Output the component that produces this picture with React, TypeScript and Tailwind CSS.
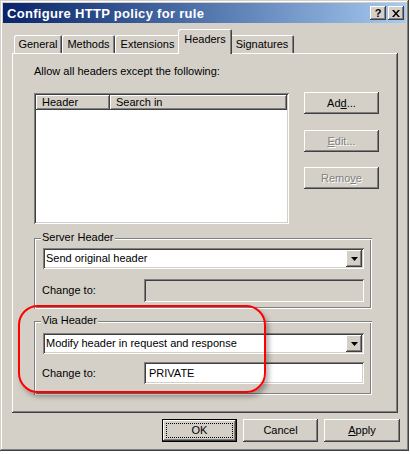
const RAISED =
  "shadow-[inset_-1px_-1px_#404040,inset_1px_1px_#ffffff,inset_-2px_-2px_#808080,inset_2px_2px_#d4d0c8]";
const SUNKEN =
  "shadow-[inset_1px_1px_#808080,inset_-1px_-1px_#ffffff,inset_2px_2px_#404040,inset_-2px_-2px_#d4d0c8]";
const ETCHED =
  "shadow-[inset_1px_1px_#808080,inset_-1px_-1px_#ffffff,inset_2px_2px_#ffffff,inset_-2px_-2px_#808080]";

const TABS = [
  { label: "General", w: "w-[48px]" },
  { label: "Methods", w: "w-[53px]" },
  { label: "Extensions", w: "w-[65px]" },
  { label: "Headers", w: "w-[50px]", active: true },
  { label: "Signatures", w: "w-[64px]" },
];

function Btn({
  children,
  disabled,
  isDefault,
  className = "",
}: {
  children: React.ReactNode;
  disabled?: boolean;
  isDefault?: boolean;
  className?: string;
}) {
  if (isDefault) {
    return (
      <div className={`h-[23px] w-[75px] border border-black ${className}`}>
        <div className={`relative flex h-full w-full items-center justify-center bg-[#d4d0c8] ${RAISED}`}>
          <div className="absolute inset-[3px] border border-dotted border-black" />
          <span className="text-black">{children}</span>
        </div>
      </div>
    );
  }
  return (
    <div
      className={`flex h-[22px] w-[75px] items-center justify-center bg-[#d4d0c8] ${RAISED} ${className} ${
        disabled ? "text-[#808080] [text-shadow:1px_1px_0_#ffffff]" : "text-black"
      }`}
    >
      {children}
    </div>
  );
}

function Combo({ value, className = "" }: { value: string; className?: string }) {
  return (
    <div className={`flex h-[21px] items-center bg-white p-[2px] ${SUNKEN} ${className}`}>
      <span className="flex-1 pl-[1px] text-black">{value}</span>
      <div className={`flex h-[17px] w-[16px] items-center justify-center bg-[#d4d0c8] ${RAISED}`}>
        <svg width="7" height="4" viewBox="0 0 7 4">
          <path d="M0 0h7L3.5 4z" fill="#000" />
        </svg>
      </div>
    </div>
  );
}

function GroupBox({
  title,
  className = "",
  children,
}: {
  title: string;
  className?: string;
  children: React.ReactNode;
}) {
  return (
    <div className={`relative w-[338px] ${ETCHED} ${className}`}>
      <span className="absolute -top-[7px] left-[7px] bg-[#d4d0c8] px-[1px] leading-[13px] text-black">
        {title}
      </span>
      {children}
    </div>
  );
}

export default function App() {
  return (
    <div className="h-[454px] w-[410px] bg-white font-['Liberation_Sans',Arial,sans-serif] text-[11px] leading-[13px]">
      <div className="h-[451px] w-[409px] bg-[#d4d0c8] p-[3px] shadow-[inset_-1px_-1px_#404040,inset_1px_1px_#d4d0c8,inset_-2px_-2px_#808080,inset_2px_2px_#ffffff]">
        {/* title bar */}
        <div className="flex h-[20px] items-center bg-gradient-to-r from-[#0a246a] to-[#a6caf0] pl-[4px] pr-[2px]">
          <span className="flex-1 text-[13px] font-bold tracking-[0.3px] text-white">
            Configure HTTP policy for rule
          </span>
          <div className={`flex h-[14px] w-[16px] items-center justify-center bg-[#d4d0c8] ${RAISED}`}>
            <span className="text-[11px] font-bold leading-none text-black">?</span>
          </div>
          <div className={`ml-[2px] flex h-[14px] w-[16px] items-center justify-center bg-[#d4d0c8] ${RAISED}`}>
            <svg width="8" height="7" viewBox="0 0 8 7">
              <path d="M0 0h2l2 2.5L6 0h2L5 3.5 8 7H6L4 4.5 2 7H0l3-3.5z" fill="#000" />
            </svg>
          </div>
        </div>

        {/* tabs */}
        <div className="ml-[9px] mt-[9px] w-[386px]">
          <div className="flex h-[21px] items-end pl-[2px]">
            {TABS.map((t) =>
              t.active ? (
                <div
                  key={t.label}
                  className={`relative z-10 -mx-[2px] -mb-[1px] flex h-[21px] ${t.w} box-content items-start justify-center rounded-t-[2px] bg-[#d4d0c8] px-[2px] pt-[4px] text-black shadow-[inset_1px_1px_#ffffff,inset_-1px_0_#404040,inset_-2px_0_#808080]`}
                >
                  {t.label}
                </div>
              ) : (
                <div
                  key={t.label}
                  className={`flex h-[18px] ${t.w} items-start justify-center rounded-t-[2px] bg-[#d4d0c8] pt-[3px] text-black shadow-[inset_1px_1px_#ffffff,inset_-1px_0_#404040,inset_-2px_0_#808080]`}
                >
                  {t.label}
                </div>
              )
            )}
          </div>

          {/* tab panel */}
          <div className="relative h-[360px] pl-[22px] pt-[12px] shadow-[inset_-1px_-1px_#404040,inset_1px_1px_#ffffff,inset_-2px_-2px_#808080]">
            <p className="text-black">Allow all headers except the following:</p>

            <div className="mt-[15px] flex">
              <div className={`h-[131px] w-[255px] bg-white p-[2px] ${SUNKEN}`}>
                <div className="flex h-[15px]">
                  <div className={`flex w-[74px] items-center bg-[#d4d0c8] pl-[6px] ${RAISED}`}>Header</div>
                  <div className={`flex flex-1 items-center bg-[#d4d0c8] pl-[6px] ${RAISED}`}>Search in</div>
                </div>
              </div>
              <div className="-mt-[1px] ml-[15px] flex flex-col">
                <Btn>
                  Ad<span className="underline">d</span>...
                </Btn>
                <Btn disabled className="mt-[16px]">
                  <span className="underline">E</span>dit...
                </Btn>
                <Btn disabled className="mt-[15px]">
                  Remo<span className="underline">v</span>e
                </Btn>
              </div>
            </div>

            <GroupBox title="Server Header" className="mt-[14px] h-[71px] pt-[10px]">
              <Combo value="Send original header" className="ml-[9px] w-[321px]" />
              <div className="mt-[10px] flex items-center">
                <span className="ml-[8px] w-[102px] text-black">Change to:</span>
                <div className={`h-[23px] w-[220px] bg-[#d4d0c8] ${SUNKEN}`} />
              </div>
            </GroupBox>

            <GroupBox title="Via Header" className="mt-[12px] h-[74px] pt-[12px]">
              <Combo value="Modify header in request and response" className="ml-[9px] w-[321px]" />
              <div className="mt-[8px] flex items-center">
                <span className="ml-[8px] w-[102px] text-black">Change to:</span>
                <div className={`flex h-[22px] w-[220px] items-center bg-white pl-[5px] text-black ${SUNKEN}`}>
                  PRIVATE
                </div>
              </div>
            </GroupBox>

            {/* red annotation */}
            <div className="pointer-events-none absolute left-[6px] top-[252px] h-[88px] w-[248px] rounded-[20px] border-2 border-[#ff0000] shadow-[3px_4px_5px_rgba(0,0,0,0.3)]" />
          </div>

          {/* bottom buttons */}
          <div className="mt-[6px] flex justify-end gap-[6px]">
            <Btn isDefault>OK</Btn>
            <Btn className="h-[23px]">Cancel</Btn>
            <Btn className="mr-[-2px] h-[23px] w-[76px]">
              <span className="underline">A</span>pply
            </Btn>
          </div>
        </div>
      </div>
    </div>
  );
}
